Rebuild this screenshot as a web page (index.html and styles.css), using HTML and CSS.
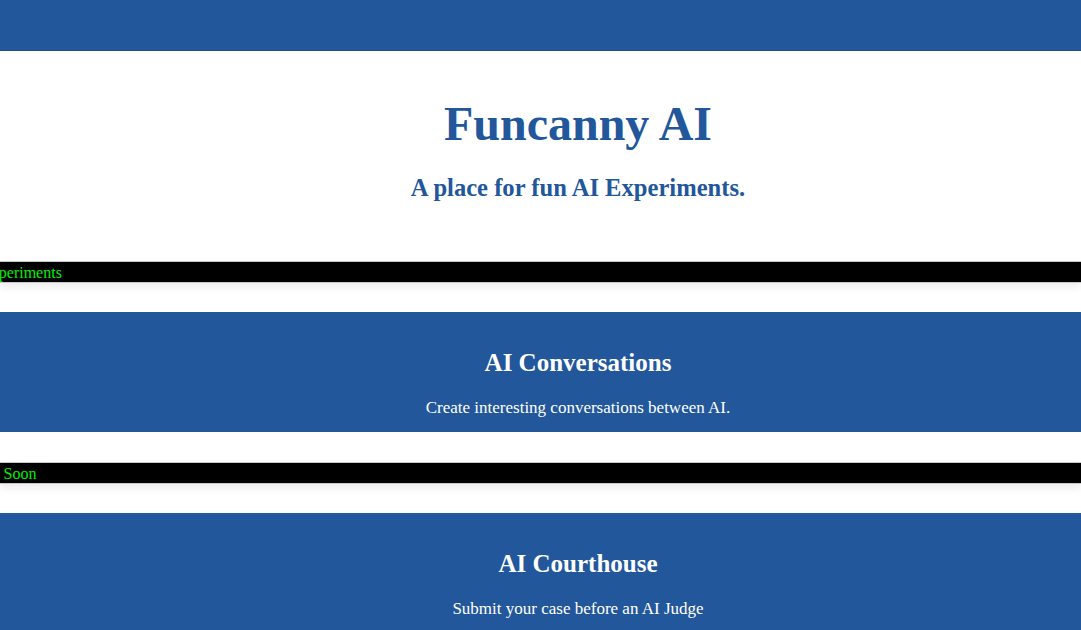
FILE: index.html
```html
<!DOCTYPE html>
<html>
<head>
<meta charset="utf-8">
<link rel="stylesheet" href="styles.css">
</head>
<body>
<div class="topbar"></div>
<header class="hero">
  <h1 class="title">Funcanny AI</h1>
  <h2 class="subtitle">A place for fun AI Experiments.</h2>
</header>
<div class="ticker"><span class="ticker-text t1">Experiments</span></div>
<section class="card">
  <h3 class="card-title">AI Conversations</h3>
  <p class="card-text">Create interesting conversations between AI.</p>
</section>
<div class="ticker"><span class="ticker-text t2">Coming Soon</span></div>
<section class="card">
  <h3 class="card-title">AI Courthouse</h3>
  <p class="card-text">Submit your case before an AI Judge</p>
</section>
</body>
</html>
```
FILE: styles.css
```css
html, body {
  margin: 0;
  padding: 0;
  background: #ffffff;
  overflow: hidden;
  font-family: "Liberation Serif", "DejaVu Serif", serif;
}
.topbar {
  height: 50px;
  background: #22579b;
  border-bottom: 1px solid #1d4f8c;
}
.hero {
  height: 210px;
  padding-left: 75px;
  text-align: center;
  color: #22579b;
  display: flex;
  flex-direction: column;
  align-items: center;
}
.title {
  margin: 45px 0 0;
  font-size: 48px;
  line-height: 56px;
  font-weight: bold;
}
.subtitle {
  margin: 22px 0 0;
  font-size: 24.6px;
  line-height: 28px;
  font-weight: bold;
}
.ticker {
  height: 20px;
  background: #000;
  border-top: 1px solid #c8c8c8;
  border-bottom: 1px solid #c8c8c8;
  box-shadow: 0 4px 8px rgba(0,0,0,0.08);
  overflow: hidden;
  white-space: nowrap;
  margin-bottom: 29px;
}
.ticker-text {
  display: inline-block;
  color: #00f000;
  font-size: 16px;
  line-height: 22px;
}
.t1 { margin-left: -19px; }
.t2 { margin-left: -52px; }
.card {
  background: #22579b;
  color: #fff;
  height: 120px;
  padding-left: 75px;
  text-align: center;
  margin-bottom: 30px;
  display: flex;
  flex-direction: column;
  align-items: center;
}
.card-title {
  margin: 36px 0 0;
  font-size: 25px;
  line-height: 30px;
  font-weight: bold;
}
.card-text {
  margin: 20px 0 0;
  font-size: 17px;
  line-height: 20px;
}
```
